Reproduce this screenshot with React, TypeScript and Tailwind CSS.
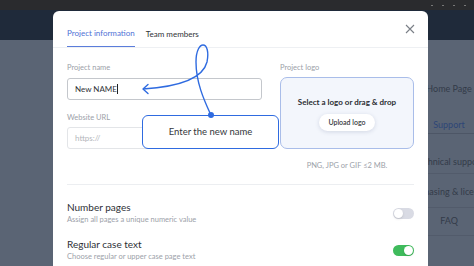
const sidebar = [
  { label: 'Home Page', active: false },
  { label: 'Support', active: true },
  { label: 'Technical support', active: false },
  { label: 'Purchasing & licenses', active: false },
  { label: 'FAQ', active: false },
];

function Toggle({ on }: { on: boolean }) {
  return (
    <div
      className={
        on
          ? 'flex h-[11px] w-[21px] items-center justify-end rounded-full bg-[#3fbb5c] px-[1px]'
          : 'flex h-[11px] w-[21px] items-center justify-start rounded-full bg-[#d9dbe4] px-[1px]'
      }
    >
      <div className="h-[9px] w-[9px] rounded-full bg-white shadow-sm" />
    </div>
  );
}

export default function App() {
  return (
    <div
      className="relative h-[266px] w-[474px] overflow-hidden bg-[#5a6474]"
      style={{ fontFamily: 'Lato, "Open Sans", sans-serif' }}
    >
      {/* page behind the dialog */}
      <div className="flex h-full flex-col">
        <div className="flex h-[10px] items-center justify-end gap-[9px] bg-[#2a2b2e] pr-[8px]">
          <span className="h-[1px] w-[2px] bg-[#777]" />
          <span className="h-[1px] w-[2px] bg-[#777]" />
          <span className="h-[1px] w-[2px] bg-[#777]" />
          <span className="h-[1px] w-[2px] bg-[#777]" />
        </div>
        <div className="h-[30px] bg-[#1f2a3a]" />
        <div className="flex flex-1 justify-end">
          <div className="flex w-[96px] shrink-0 translate-x-[23px] flex-col pt-[40px] text-center text-[9px] text-[#333b49]">
            <div className="h-[18px] whitespace-nowrap leading-[18px]">{sidebar[0].label}</div>
            <div className="ml-[13px] h-[16px] w-[1px] bg-[#4b5464]" />
            <div className="h-[20px] whitespace-nowrap border-b border-[#4d5666] leading-[22px] text-[#2e4677]">
              {sidebar[1].label}
            </div>
            <div className="h-[40px] whitespace-nowrap border-b border-[#525b6b] leading-[56px]">{sidebar[2].label}</div>
            <div className="h-[34px] whitespace-nowrap border-b border-[#525b6b] leading-[36px]">{sidebar[3].label}</div>
            <div className="h-[28px] whitespace-nowrap border-b border-[#525b6b] leading-[26px]">{sidebar[4].label}</div>
          </div>
        </div>
      </div>

      {/* dialog */}
      <div className="absolute left-[53px] top-[11px] h-[270px] w-[375px] rounded-t-[6px] bg-white">
        <div className="relative flex h-[37px] items-end gap-[11px] border-b border-[#eef0f3] px-[14px]">
          <div className="border-b-[1.5px] border-[#5b7ddb] pb-[7px] text-[8px] text-[#4f72d6]">
            Project information
          </div>
          <div className="pb-[7px] text-[8px] text-[#2f3237]">Team members</div>
          <svg className="absolute right-[13px] top-[13px]" width="10" height="10" viewBox="0 0 10 10">
            <path d="M1 1 L9 9 M9 1 L1 9" stroke="#7a7f87" strokeWidth="1.1" />
          </svg>
        </div>

        <div className="px-[14px] pt-[15px]">
          <div className="flex gap-[18px]">
            <div className="flex w-[195px] flex-col">
              <div className="text-[7.5px] leading-[10px] text-[#9ca1a9]">Project name</div>
              <div className="mt-[5px] flex h-[22px] items-center rounded-[3px] border border-[#c4c7cc] px-[7px] text-[8px] text-[#2f3237]">
                New NAME<span className="ml-[0.5px] h-[10px] w-[1px] bg-[#222]" />
              </div>
              <div className="mt-[13px] text-[7.5px] leading-[10px] text-[#9ca1a9]">Website URL</div>
              <div className="mt-[4px] flex h-[22px] items-center rounded-[3px] border border-[#e3e5e8] px-[7px] text-[8px] text-[#b3b6bb]">
                https://
              </div>
            </div>
            <div className="flex w-[134px] flex-col">
              <div className="text-[7.5px] leading-[10px] text-[#9ca1a9]">Project logo</div>
              <div className="mt-[4px] flex h-[72px] flex-col items-center justify-center rounded-[7px] border border-[#a9bde9] bg-[#f3f6fc]">
                <div className="text-[8px] font-bold text-[#2b2e33]">Select a logo or drag & drop</div>
                <div className="mt-[6px] flex h-[17px] w-[56px] items-center justify-center rounded-full bg-white text-[7px] font-semibold text-[#3a3d42] shadow-[0_1px_4px_rgba(60,80,120,0.18)]">
                  Upload logo
                </div>
              </div>
              <div className="mt-[11px] text-center text-[7.5px] text-[#9ca1a9]">PNG, JPG or GIF ≤2 MB.</div>
            </div>
          </div>

          <div className="mt-[13px] h-[1px] bg-[#eceef1]" />

          <div className="mt-[16px] flex items-center justify-between">
            <div>
              <div className="text-[10px] leading-[13px] text-[#2d3036]">Number pages</div>
              <div className="text-[7.5px] leading-[12px] text-[#9ca1a9]">Assign all pages a unique numeric value</div>
            </div>
            <Toggle on={false} />
          </div>
          <div className="mt-[12px] flex items-center justify-between">
            <div>
              <div className="text-[10px] leading-[13px] text-[#2d3036]">Regular case text</div>
              <div className="text-[7.5px] leading-[12px] text-[#9ca1a9]">Choose regular or upper case page text</div>
            </div>
            <Toggle on={true} />
          </div>
        </div>
      </div>

      {/* annotation */}
      <svg className="pointer-events-none absolute left-0 top-0" width="474" height="266" viewBox="0 0 474 266">
        <path
          d="M210,113 C204,100 196,82 196,62 C196,50 200,45 203,45 C207,45 209,52 207,62 C204,74 190,86 143,89"
          fill="none"
          stroke="#2f6be0"
          strokeWidth="1.4"
        />
        <path d="M148,84.5 L143,89 L148,93.5" fill="none" stroke="#2f6be0" strokeWidth="1.4" strokeLinecap="round" strokeLinejoin="round" />
      </svg>
      <div className="absolute left-[142px] top-[115px] flex h-[34px] w-[137px] items-center justify-center rounded-[6px] border-[1.5px] border-[#2f6be0] bg-white text-[9.5px] text-[#34373c]">
        Enter the new name
      </div>
      <div className="absolute left-[208px] top-[112px] h-[6px] w-[6px] rounded-full bg-[#2f6be0]" />
    </div>
  );
}
